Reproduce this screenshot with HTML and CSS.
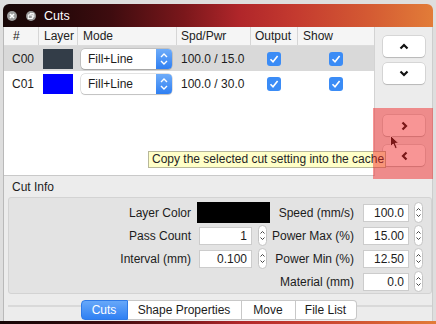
FILE: index.html
```html
<!DOCTYPE html>
<html>
<head>
<meta charset="utf-8">
<link rel="stylesheet" href="styles.css">
</head>
<body>
<div class="screen">
  <div class="window">
    <div class="titlebar">
      <span class="tb-btn"><svg width="10" height="10" viewBox="0 0 10 10"><circle cx="5" cy="5" r="5" fill="#9c9c9c"/><path d="M3 3 L7 7 M7 3 L3 7" stroke="#fff" stroke-width="1.6"/></svg></span>
      <span class="tb-btn tb-restore"><svg width="10" height="10" viewBox="0 0 10 10"><circle cx="5" cy="5" r="5" fill="#9c9c9c"/><rect x="2.3" y="4" width="4" height="3.5" fill="none" stroke="#fff" stroke-width="1"/><path d="M4 4 V2.6 H7.8 V6 H6.3" fill="none" stroke="#fff" stroke-width="1"/></svg></span>
      <span class="title">Cuts</span>
    </div>
    <div class="content">
      <div class="top">
        <div class="table">
          <div class="thead">
            <div class="th th-first">#</div>
            <div class="th">Layer</div>
            <div class="th">Mode</div>
            <div class="th th-narrow">Spd/Pwr</div>
            <div class="th th-narrow">Output</div>
            <div class="th">Show</div>
          </div>
          <div class="row selected">
            <div class="td td-first">C00</div>
            <div class="td"><div class="layer-swatch dark"></div></div>
            <div class="td td-combo">
              <div class="combo"><span class="combo-text">Fill+Line</span><span class="combo-btn"><svg width="16" height="20" viewBox="0 0 16 20"><path d="M5 8 L8 5 L11 8 M5 12 L8 15 L11 12" fill="none" stroke="#fff" stroke-width="1.4"/></svg></span></div>
            </div>
            <div class="td td-narrow">100.0 / 15.0</div>
            <div class="td td-center"><span class="check"><svg width="14" height="14" viewBox="0 0 14 14"><path d="M3.5 7.3 L6 9.8 L10.6 4" fill="none" stroke="#fff" stroke-width="1.6"/></svg></span></div>
            <div class="td td-center"><span class="check"><svg width="14" height="14" viewBox="0 0 14 14"><path d="M3.5 7.3 L6 9.8 L10.6 4" fill="none" stroke="#fff" stroke-width="1.6"/></svg></span></div>
          </div>
          <div class="row">
            <div class="td td-first">C01</div>
            <div class="td"><div class="layer-swatch blue"></div></div>
            <div class="td td-combo">
              <div class="combo"><span class="combo-text">Fill+Line</span><span class="combo-btn"><svg width="16" height="20" viewBox="0 0 16 20"><path d="M5 8 L8 5 L11 8 M5 12 L8 15 L11 12" fill="none" stroke="#fff" stroke-width="1.4"/></svg></span></div>
            </div>
            <div class="td td-narrow">100.0 / 30.0</div>
            <div class="td td-center"><span class="check"><svg width="14" height="14" viewBox="0 0 14 14"><path d="M3.5 7.3 L6 9.8 L10.6 4" fill="none" stroke="#fff" stroke-width="1.6"/></svg></span></div>
            <div class="td td-center"><span class="check"><svg width="14" height="14" viewBox="0 0 14 14"><path d="M3.5 7.3 L6 9.8 L10.6 4" fill="none" stroke="#fff" stroke-width="1.6"/></svg></span></div>
          </div>
        </div>
        <div class="side">
          <div class="sbtn"><svg width="10" height="7" viewBox="0 0 10 7"><path d="M1.5 5.5 L5 2 L8.5 5.5" fill="none" stroke="#111" stroke-width="2.2"/></svg></div>
          <div class="sbtn sbtn-down"><svg width="10" height="7" viewBox="0 0 10 7"><path d="M1.5 1.5 L5 5 L8.5 1.5" fill="none" stroke="#111" stroke-width="2.2"/></svg></div>
          <div class="sbtn sbtn-right"><svg width="7" height="10" viewBox="0 0 7 10"><path d="M1.5 1.5 L5 5 L1.5 8.5" fill="none" stroke="#111" stroke-width="2.2"/></svg></div>
          <div class="sbtn sbtn-left"><svg width="7" height="10" viewBox="0 0 7 10"><path d="M5.5 1.5 L2 5 L5.5 8.5" fill="none" stroke="#111" stroke-width="2.2"/></svg></div>
        </div>
      </div>
      <div class="section-label">Cut Info</div>
      <div class="group">
        <div class="lbl">Layer Color</div>
        <div class="field"><div class="color-swatch"></div></div>
        <div class="lbl lbl2">Speed (mm/s)</div>
        <div class="spin spin-r"><div class="inp">100.0</div><span class="arrows"><svg width="9" height="21" viewBox="0 0 9 21"><rect x="0.5" y="0.5" width="8" height="20" rx="4" fill="#fff" stroke="#c4c4c4"/><path d="M2.5 8.5 L4.5 6.5 L6.5 8.5 M2.5 12.5 L4.5 14.5 L6.5 12.5" fill="none" stroke="#444" stroke-width="1"/></svg></span></div>

        <div class="lbl">Pass Count</div>
        <div class="spin"><div class="inp">1</div><span class="arrows"><svg width="9" height="21" viewBox="0 0 9 21"><rect x="0.5" y="0.5" width="8" height="20" rx="4" fill="#fff" stroke="#c4c4c4"/><path d="M2.5 8.5 L4.5 6.5 L6.5 8.5 M2.5 12.5 L4.5 14.5 L6.5 12.5" fill="none" stroke="#444" stroke-width="1"/></svg></span></div>
        <div class="lbl lbl2">Power Max (%)</div>
        <div class="spin spin-r"><div class="inp">15.00</div><span class="arrows"><svg width="9" height="21" viewBox="0 0 9 21"><rect x="0.5" y="0.5" width="8" height="20" rx="4" fill="#fff" stroke="#c4c4c4"/><path d="M2.5 8.5 L4.5 6.5 L6.5 8.5 M2.5 12.5 L4.5 14.5 L6.5 12.5" fill="none" stroke="#444" stroke-width="1"/></svg></span></div>

        <div class="lbl">Interval (mm)</div>
        <div class="spin"><div class="inp">0.100</div><span class="arrows"><svg width="9" height="21" viewBox="0 0 9 21"><rect x="0.5" y="0.5" width="8" height="20" rx="4" fill="#fff" stroke="#c4c4c4"/><path d="M2.5 8.5 L4.5 6.5 L6.5 8.5 M2.5 12.5 L4.5 14.5 L6.5 12.5" fill="none" stroke="#444" stroke-width="1"/></svg></span></div>
        <div class="lbl lbl2">Power Min (%)</div>
        <div class="spin spin-r"><div class="inp">12.50</div><span class="arrows"><svg width="9" height="21" viewBox="0 0 9 21"><rect x="0.5" y="0.5" width="8" height="20" rx="4" fill="#fff" stroke="#c4c4c4"/><path d="M2.5 8.5 L4.5 6.5 L6.5 8.5 M2.5 12.5 L4.5 14.5 L6.5 12.5" fill="none" stroke="#444" stroke-width="1"/></svg></span></div>

        <div class="lbl"></div>
        <div class="field"></div>
        <div class="lbl lbl2">Material (mm)</div>
        <div class="spin spin-r"><div class="inp">0.0</div><span class="arrows"><svg width="9" height="21" viewBox="0 0 9 21"><rect x="0.5" y="0.5" width="8" height="20" rx="4" fill="#fff" stroke="#c4c4c4"/><path d="M2.5 8.5 L4.5 6.5 L6.5 8.5 M2.5 12.5 L4.5 14.5 L6.5 12.5" fill="none" stroke="#444" stroke-width="1"/></svg></span></div>
      </div>
      <div class="tabs-wrap">
        <div class="tabs">
          <div class="tab tab-cuts active">Cuts</div>
          <div class="tab tab-shape">Shape Properties</div>
          <div class="tab tab-move">Move</div>
          <div class="tab tab-files">File List</div>
        </div>
      </div>
    </div>
  </div>
  <div class="below-bar"></div>

  <div class="tooltip">Copy the selected cut setting into the cache</div>
  <svg class="cursor" width="10" height="15" viewBox="0 0 10 15"><path d="M0.5 0.5 L0.5 11.5 L3.2 9 L5.2 13.6 L7.2 12.7 L5.3 8.3 L8.8 8.3 Z" fill="#111" stroke="#fff" stroke-width="0.9"/></svg>
  <div class="highlight"></div>
</div>
</body>
</html>
```

FILE: styles.css
```css
* { box-sizing: border-box; }

body {
  margin: 0;
  width: 436px;
  height: 324px;
  overflow: hidden;
  background: #dedede;
  font-family: "Liberation Sans", Arial, sans-serif;
  font-size: 12px;
  color: #1c1c1c;
}

.screen {
  position: relative;
  width: 436px;
  height: 324px;
  padding-top: 4px;
  display: flex;
  flex-direction: column;
}

.window {
  margin-left: 3px;
  width: 430px;
  height: 317px;
  flex: none;
  display: flex;
  flex-direction: column;
  border-radius: 6px 6px 0 0;
  overflow: hidden;
  background: #ececec;
}

.titlebar {
  height: 23px;
  flex: none;
  display: flex;
  align-items: center;
  padding-left: 4px;
  background: linear-gradient(90deg, #170707 0%, #240809 12%, #3e0c0f 25%, #7a171b 42%, #b0262a 55%, #c43a2f 68%, #d45a33 85%, #e27c38 100%);
}

.tb-btn {
  width: 10px;
  height: 10px;
  display: flex;
}

.tb-restore { margin-left: 9px; }

.title {
  margin-left: 8px;
  color: #fff;
  font-size: 12.5px;
}

.content {
  flex: 1;
  display: flex;
  flex-direction: column;
  border-left: 1px solid #b9b9b9;
  border-right: 1px solid #cdcdcd;
}

.top {
  display: flex;
  height: 149px;
  flex: none;
}

.table {
  width: 371px;
  background: #fff;
  border-bottom: 1px solid #c9c9c9;
  border-right: 1px solid #d3d3d3;
}

.thead,
.row {
  display: grid;
  grid-template-columns: 34px 39px 99px 74px 47px 1fr;
}

.thead {
  height: 19px;
  background: #f5f5f5;
  border-bottom: 1px solid #dcdcdc;
}

.th {
  border-left: 1px solid #d6d6d6;
  padding-left: 5px;
  line-height: 18px;
  color: #222;
}

.th-first {
  border-left: none;
  padding-left: 9px;
}

.th-narrow { padding-left: 4px; }

.row {
  height: 25px;
  align-items: center;
}

.row.selected { background: #d9d9d9; }

.td { padding-left: 5px; }
.td-first { padding-left: 8px; }
.td-combo { padding-left: 4px; }
.td-narrow { padding-left: 5px; }

.td-center {
  padding-left: 0;
  display: flex;
  justify-content: center;
}

.layer-swatch {
  width: 30px;
  height: 20px;
}

.layer-swatch.dark { background: #333d48; }
.layer-swatch.blue { background: #0000ff; }

.combo {
  width: 91px;
  height: 20px;
  display: flex;
  background: #fff;
  border-radius: 4px;
  box-shadow: 0 0 0 0.5px rgba(0, 0, 0, 0.22), 0 1px 1px rgba(0, 0, 0, 0.15);
}

.combo-text {
  flex: 1;
  padding-left: 7px;
  line-height: 20px;
}

.combo-btn {
  width: 16px;
  display: flex;
  background: linear-gradient(#6eacf9, #2f7ff2);
  border-radius: 0 4px 4px 0;
}

.check {
  width: 14px;
  height: 14px;
  display: flex;
  border-radius: 3px;
  background: #3b8cf6;
}

.side {
  flex: 1;
  display: flex;
  flex-direction: column;
  padding: 9px 0 0 8px;
}

.sbtn {
  width: 42px;
  height: 21px;
  display: flex;
  align-items: center;
  justify-content: center;
  background: #fff;
  border-radius: 4px;
  box-shadow: 0 0 0 0.5px rgba(0, 0, 0, 0.18), 0 1px 1px rgba(0, 0, 0, 0.14);
}

.sbtn-down { margin-top: 6px; }
.sbtn-right { margin-top: 31px; }
.sbtn-left { margin-top: 9px; }

.section-label {
  height: 21px;
  flex: none;
  padding-left: 8px;
  line-height: 22px;
}

.group {
  margin-left: 4px;
  height: 97px;
  flex: none;
  display: grid;
  grid-template-columns: 188px 75px 89px 1fr;
  grid-auto-rows: 23px;
  align-items: center;
  padding-top: 3px;
  background: #e3e3e3;
  border: 1px solid #d3d3d3;
  border-radius: 3px;
}

.lbl {
  text-align: right;
  padding-right: 6px;
}

.lbl2 { padding-right: 7px; }

.color-swatch {
  width: 73px;
  height: 21px;
  background: #000;
}

.spin {
  display: flex;
  align-items: center;
}

.inp {
  margin-left: 2px;
  width: 53px;
  height: 18px;
  background: #fff;
  border: 1px solid #cccccc;
  text-align: right;
  padding-right: 4px;
  line-height: 16px;
}

.arrows {
  margin-left: 6px;
  width: 9px;
  height: 21px;
  display: flex;
}

.spin-r .inp { width: 46px; }
.spin-r .arrows { margin-left: 5px; }

.tabs-wrap {
  position: relative;
  margin-top: 6px;
  height: 20px;
  flex: none;
  display: flex;
  justify-content: center;
}

.tabs-wrap::before {
  content: "";
  position: absolute;
  left: 4px;
  right: 0;
  top: 5px;
  height: 2px;
  background: #d9d9d9;
}

.tabs {
  position: relative;
  display: flex;
  height: 20px;
  margin-left: 1px;
}

.tab {
  height: 20px;
  line-height: 18px;
  text-align: center;
  background: #fff;
  border: 1px solid #c8c8c8;
  border-left: none;
  color: #1c1c1c;
}

.tab-cuts { width: 47px; border-radius: 4px 0 0 4px; border-left: 1px solid #2f7ae6; }
.tab-shape { width: 114px; }
.tab-move { width: 54px; }
.tab-files { width: 61px; border-radius: 0 4px 4px 0; }

.tab.active {
  color: #fff;
  background: linear-gradient(#67a8f9, #2f80f3);
  border-color: #2f7ae6;
}

.below-bar {
  height: 3px;
  flex: none;
  background: linear-gradient(90deg, #170707 0%, #240809 12%, #3e0c0f 25%, #7a171b 42%, #b0262a 55%, #c43a2f 68%, #d45a33 85%, #e27c38 100%);
}

.tooltip {
  position: absolute;
  left: 148px;
  top: 151px;
  width: 238px;
  height: 17px;
  padding-left: 3px;
  line-height: 15px;
  background: #ffffc8;
  border: 1px solid #b8b89a;
  color: #252525;
  white-space: nowrap;
  z-index: 2;
}

.cursor {
  position: absolute;
  left: 390px;
  top: 135px;
  z-index: 2;
}

.highlight {
  position: absolute;
  left: 373px;
  top: 108px;
  width: 60px;
  height: 71px;
  background: rgba(240, 30, 30, 0.47);
  z-index: 3;
}
```
